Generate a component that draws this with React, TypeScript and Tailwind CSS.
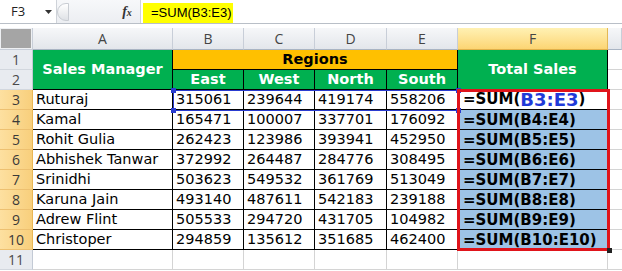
import React from "react";

const rows: [string, string, string, string, string][] = [
  ["Ruturaj", "315061", "239644", "419174", "558206"],
  ["Kamal", "165471", "100007", "337701", "176092"],
  ["Rohit Gulia", "262423", "123986", "393941", "452950"],
  ["Abhishek Tanwar", "372992", "264487", "284776", "308495"],
  ["Srinidhi", "503623", "549532", "361769", "513049"],
  ["Karuna Jain", "493140", "487611", "542183", "239188"],
  ["Adrew Flint", "505533", "294720", "431705", "104982"],
  ["Christoper", "294859", "135612", "351685", "462400"],
];

const cellFont = { fontFamily: '"DejaVu Sans", Verdana, sans-serif' };
const hdrFont = { fontFamily: '"Open Sans", "Liberation Sans", sans-serif' };

function RowHead({ n, hi }: { n: number; hi?: boolean }) {
  return (
    <div
      style={hdrFont}
      className={
        "flex items-center justify-center border-b border-r text-[14px] leading-none " +
        (hi
          ? "bg-gradient-to-r from-[#fde0a0] to-[#f8cf7c] border-r-[#e9b755] border-b-[#edc070] text-[#3a3a3a]"
          : "bg-[#e8ebf0] border-r-[#c3cad5] border-b-[#d2d7de] text-[#4a4a4a]")
      }
    >
      {n}
    </div>
  );
}

function ColHead({ l, hi }: { l: string; hi?: boolean }) {
  return (
    <div
      style={hdrFont}
      className={
        "flex items-center justify-center border-b border-r text-[14px] leading-none " +
        (hi
          ? "bg-gradient-to-b from-[#fff1b3] to-[#fcd573] border-r-[#e3b855] border-b-[#e0b04a] text-[#444]"
          : "bg-gradient-to-b from-[#f6f7f9] to-[#e3e6eb] border-r-[#c8ced8] border-b-[#a9b4c3] text-[#444]")
      }
    >
      {l}
    </div>
  );
}

export default function App() {
  return (
    <div className="w-[622px] h-[271px] bg-white overflow-hidden relative">
      {/* formula bar */}
      <div className="flex h-[24px] border-b border-[#b9bfc7] bg-gradient-to-b from-[#f7f8fa] to-[#eceef2]">
        <div
          style={hdrFont}
          className="relative w-[57px] h-[23px] bg-white border-r border-[#cfd3d9] flex items-center pl-[11px] text-[13px] text-[#222]"
        >
          F3
          <svg className="absolute left-[45px] top-[10px]" width="7" height="4" viewBox="0 0 7 4">
            <path d="M0 0 H7 L3.5 4 Z" fill="#333" />
          </svg>
        </div>
        <div className="w-[13px] h-[23px] flex items-center">
          <div className="w-[12px] h-[18px] rounded-l-full border border-[#c9cdd3] bg-gradient-to-b from-[#ffffff] to-[#dfe2e6]" />
        </div>
        <div className="w-[44px]" />
        <div className="w-[26px] flex items-center justify-center">
          <span
            className="italic font-bold text-[14px] text-[#333]"
            style={{ fontFamily: '"Liberation Serif", serif' }}
          >
            f<span className="text-[10px]">x</span>
          </span>
        </div>
        <div className="flex-1 bg-white border-l border-[#cfd3d9] pl-[2px] pt-[3px]">
          <div
            style={{ fontFamily: '"Liberation Sans", Arial, sans-serif' }}
            className="w-[90px] h-[20px] bg-[#ffff00] flex items-center pl-[8px] text-[13px] text-black whitespace-nowrap"
          >
            =SUM(B3:E3)
          </div>
        </div>
      </div>
      <div className="h-[4px]" />

      {/* grid */}
      <div className="relative">
        <div className="grid grid-cols-[33px_140px_71px_71px_72px_71px_150px_14px] grid-rows-[22px_repeat(11,20px)]">
          {/* column headers */}
          <div className="bg-[#eef0f3] border-b border-r border-[#c8ced8] p-[1px]">
            <div className="w-full h-full bg-[#a5a5a5]" />
          </div>
          {["A", "B", "C", "D", "E"].map((l) => (
            <ColHead key={l} l={l} />
          ))}
          <ColHead l="F" hi />
          <ColHead l="" />

          {/* row 1 */}
          <RowHead n={1} />
          <div
            style={cellFont}
            className="row-span-2 bg-[#00b050] border-r border-b border-black flex items-center justify-center text-white font-bold text-[14.5px]"
          >
            Sales Manager
          </div>
          <div
            style={cellFont}
            className="col-span-4 bg-[#ffc000] border-r border-b border-black flex items-center justify-center text-black font-bold text-[14.5px]"
          >
            Regions
          </div>
          <div
            style={cellFont}
            className="row-span-2 bg-[#00b050] border-r border-b border-black flex items-center justify-center text-white font-bold text-[14.5px]"
          >
            Total Sales
          </div>
          <div className="border-b border-[#d4d4d4]" />

          {/* row 2 */}
          <RowHead n={2} />
          {["East", "West", "North", "South"].map((h) => (
            <div
              key={h}
              style={cellFont}
              className="bg-[#00b050] border-r border-b border-black flex items-center justify-center text-white font-bold text-[14.5px]"
            >
              {h}
            </div>
          ))}
          <div className="border-b border-[#d4d4d4]" />

          {rows.map((r, i) => {
            const n = i + 3;
            return (
              <React.Fragment key={n}>
                <RowHead n={n} hi />
                {r.map((v, j) => (
                  <div
                    key={j}
                    style={cellFont}
                    className="bg-white border-r border-b border-black flex items-center pl-[3px] pt-[1px] text-[14.5px] text-black whitespace-nowrap overflow-hidden"
                  >
                    {v}
                  </div>
                ))}
                {n === 3 ? (
                  <div
                    style={cellFont}
                    className="bg-white border-r border-b border-black flex items-center pl-[5px] text-black font-bold text-[15px] whitespace-nowrap"
                  >
                    =SUM(
                    <span className="text-[#1f3ad8] text-[18px] leading-none">B3:E3</span>)
                  </div>
                ) : (
                  <div
                    style={cellFont}
                    className="bg-[#9dc3e6] border-r border-b border-black flex items-center pl-[5px] pt-[1px] text-black font-bold text-[15px] whitespace-nowrap"
                  >
                    =SUM(B{n}:E{n})
                  </div>
                )}
                <div className="border-b border-[#d4d4d4]" />
              </React.Fragment>
            );
          })}

          {/* row 11 */}
          <RowHead n={11} />
          {[0, 1, 2, 3, 4, 5].map((k) => (
            <div key={k} className="bg-white border-r border-b border-[#d4d4d4]" />
          ))}
          <div className="border-b border-[#d4d4d4]" />
        </div>

        {/* blue range highlight B3:E3 */}
        <div className="absolute left-[173px] top-[62px] w-[286px] h-[21px] border border-[#2a3cd0] pointer-events-none" />
        <div className="absolute left-[171px] top-[60px] w-[5px] h-[5px] bg-[#2a3cd0]" />
        <div className="absolute left-[171px] top-[80px] w-[5px] h-[5px] bg-[#2a3cd0]" />
        <div className="absolute left-[456px] top-[60px] w-[5px] h-[5px] bg-[#2a3cd0]" />
        <div className="absolute left-[456px] top-[80px] w-[5px] h-[5px] bg-[#2a3cd0]" />

        {/* red selection box F3:F10 */}
        <div className="absolute left-[457px] top-[61px] w-[153px] h-[162px] border-[3px] border-[#e0141b] pointer-events-none" />
        <div className="absolute left-[607px] top-[220px] w-[5px] h-[5px] bg-[#222]" />
      </div>
    </div>
  );
}
